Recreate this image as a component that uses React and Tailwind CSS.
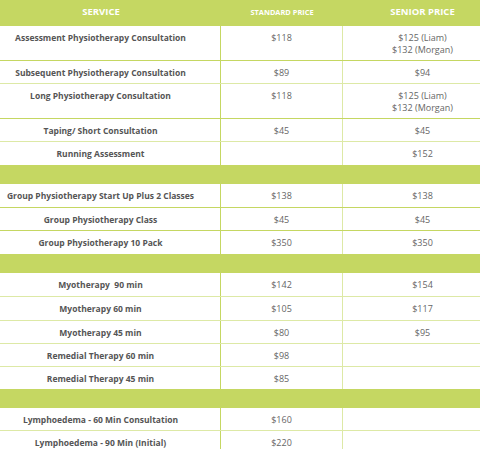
const BRIGHT = "border-[#c5d762]";
const LIGHT = "border-[#dde9a6]";

const rows = [
  { s: "Assessment Physiotherapy Consultation", p: "$118", sp: ["$125 (Liam)", "$132 (Morgan)"], h: "h-[35px]", line: BRIGHT },
  { s: "Subsequent Physiotherapy Consultation", p: "$89", sp: ["$94"], h: "h-[23px]", line: LIGHT },
  { s: "Long Physiotherapy Consultation", p: "$118", sp: ["$125 (Liam)", "$132 (Morgan)"], h: "h-[35px]", line: BRIGHT },
  { s: "Taping/ Short Consultation", p: "$45", sp: ["$45"], h: "h-[23px]", line: LIGHT },
  { s: "Running Assessment", p: "", sp: ["$152"], h: "h-[24px]", line: BRIGHT },
  { gap: true },
  { s: "Group Physiotherapy Start Up Plus 2 Classes", p: "$138", sp: ["$138"], h: "h-[24px]", line: BRIGHT },
  { s: "Group Physiotherapy Class", p: "$45", sp: ["$45"], h: "h-[23px]", line: BRIGHT },
  { s: "Group Physiotherapy 10 Pack", p: "$350", sp: ["$350"], h: "h-[24px]", line: BRIGHT },
  { gap: true },
  { s: "Myotherapy  90 min", p: "$142", sp: ["$154"], h: "h-[24px]", line: LIGHT },
  { s: "Myotherapy 60 min", p: "$105", sp: ["$117"], h: "h-[24px]", line: LIGHT },
  { s: "Myotherapy 45 min", p: "$80", sp: ["$95"], h: "h-[23px]", line: LIGHT },
  { s: "Remedial Therapy 60 min", p: "$98", sp: [], h: "h-[23px]", line: LIGHT },
  { s: "Remedial Therapy 45 min", p: "$85", sp: [], h: "h-[23px]", line: BRIGHT },
  { gap: true },
  { s: "Lymphoedema - 60 Min Consultation", p: "$160", sp: [], h: "h-[23px]", line: LIGHT },
  { s: "Lymphoedema - 90 Min (Initial)", p: "$220", sp: [], h: "h-[23px]", line: LIGHT },
];

const font = { fontFamily: '"Open Sans", "Noto Sans", sans-serif' };

export default function App() {
  return (
    <div className="w-[480px] h-[449px] overflow-hidden bg-white" style={font}>
      <div className="-ml-[19px] w-[521px]">
        {/* header */}
        <div className="flex h-[26px] bg-[#c5d762] text-white font-bold">
          <div className="w-[240px] flex items-center justify-center text-[9.5px] pb-[1px]">SERVICE</div>
          <div className="w-[122px] flex items-center justify-center text-[7.4px]">STANDARD PRICE</div>
          <div className="w-[159px] flex items-center justify-center text-[9.5px] pb-[1px]">SENIOR PRICE</div>
        </div>

        {rows.map((r, i) =>
          r.gap ? (
            <div key={i} className="h-[18px] bg-[#c5d762]" />
          ) : (
            <div key={i} className={`flex ${r.h} border-b ${r.line} text-[9px] leading-[12px]`}>
              <div className="w-[240px] border-r border-[#c5d762] pt-[6px] text-center text-[8.5px] font-bold text-[#555555] whitespace-pre">
                {r.s}
              </div>
              <div className="w-[122px] border-r border-[#dde9a6] pt-[6px] text-center text-[#666666]">
                {r.p}
              </div>
              <div className="w-[159px] pt-[6px] text-center text-[#666666]">
                {r.sp.map((t, j) => (
                  <div key={j}>{t}</div>
                ))}
              </div>
            </div>
          )
        )}
      </div>
    </div>
  );
}
